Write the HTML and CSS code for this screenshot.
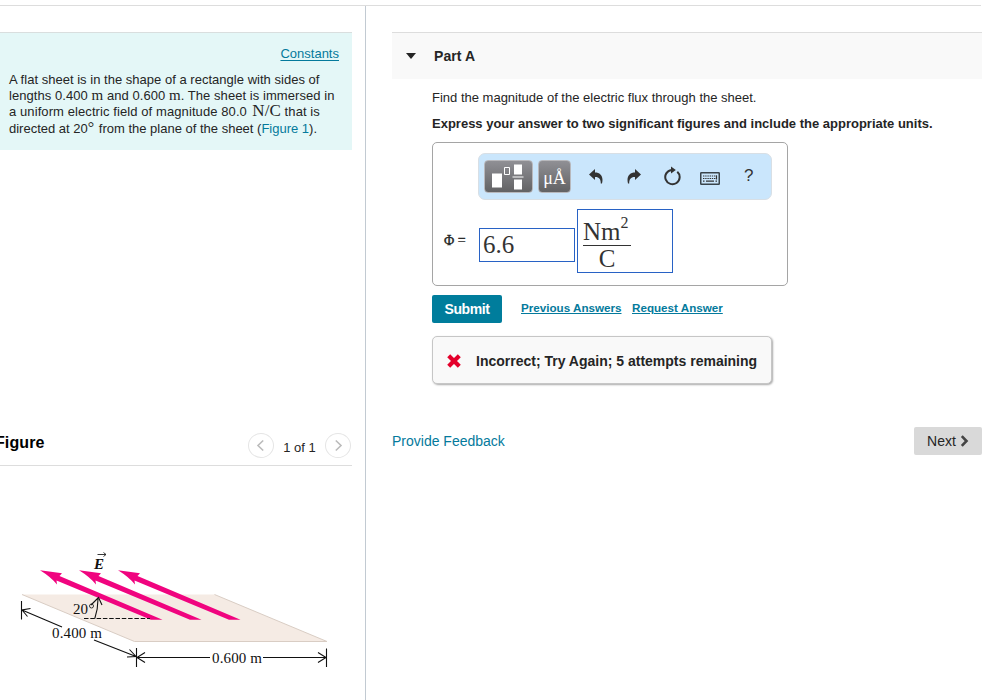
FILE: index.html
```html
<!DOCTYPE html>
<html lang="en">
<head>
<meta charset="utf-8">
<title>Electric flux</title>
<link rel="stylesheet" href="styles.css">
</head>
<body>
<div class="page">
  <aside class="left">
    <section class="intro">
      <div class="constants"><a href="#">Constants</a></div>
      <p class="problem">
        <span class="line l1">A flat sheet is in the shape of a rectangle with sides of</span>
        <span class="line l2">lengths 0.400 <span class="math">m</span> and 0.600 <span class="math">m</span>. The sheet is immersed in</span>
        <span class="line l3">a uniform electric field of magnitude 80.0 &nbsp;<span class="math unit">N/C</span> that is</span>
        <span class="line l4">directed at 20<span class="deg">°</span> from the plane of the sheet (<a href="#">Figure 1</a>).</span>
      </p>
    </section>
    <header class="fig-head">
      <h2>Figure</h2>
      <div class="pager">
        <span class="circle"><svg width="24" height="24" viewBox="0 0 24 24"><path d="M14.2 6.500 9 11.500l5.200 5"/></svg></span>
        <span class="count">1 of 1</span>
        <span class="circle"><svg width="24" height="24" viewBox="0 0 24 24"><path d="M9.800 6.500 15 11.500l-5.200 5"/></svg></span>
      </div>
    </header>
    <svg class="diagram" width="352" height="234" viewBox="0 466 352 234">
      <path class="sheet" d="M22 594.5H214.500L327 641.500H134.500Z"/>
      <path class="sheet-edge" d="M22 594.500 134.500 641.500H327L214.500 594.500"/>
      <g class="field">
        <path id="vec" d="M40 570.200 62 573.200 59.500 576 162.500 619.800H151L56.500 580.600 57 584.500Q51 577 40 570.200Z"/>
        <use href="#vec" x="39"/>
        <use href="#vec" x="78"/>
      </g>
      <g class="ink">
        <path stroke-dasharray="4.500 1.800" d="M84 618.500H150"/>
        <path d="M94.800 618.500Q98 609 98 599M91 605 98.500 597.500 102 605"/>
        <path d="M21.500 601V619.500M22 610 62 627M30.500 608.500 22 610 27.500 616.500"/>
        <path d="M94 640 136 656.500M129.500 649.500 136 656.500 127 657"/>
        <path d="M136.500 648V667M137 657.500H210M145 652.500 137 657.500 145 662.500"/>
        <path d="M263 657.500H326M318 652.500 326 657.500 318 662.500M326.500 648.500V667"/>
      </g>
      <path class="vector-mark" d="M97.500 554.500H106M103.500 552.500 106 554.500 103.500 556.500"/>
      <text class="e-label" x="94" y="569">E</text>
      <text x="73" y="614">20</text>
      <circle class="degree" cx="91.500" cy="606" r="2"/>
      <text x="52" y="637.500" textLength="50">0.400 m</text>
      <text x="212" y="662.500" textLength="50">0.600 m</text>
    </svg>
  </aside>
  <main class="right">
    <header class="part"><span class="caret"></span><h1>Part A</h1></header>
    <div class="body">
      <p class="question"><span>Find the magnitude of the electric flux through the sheet.</span></p>
      <p class="instruction"><span>Express your answer to two significant figures and include the appropriate units.</span></p>
      <section class="answer">
        <div class="toolbar">
          <span class="tool templates">
            <svg width="48" height="32" viewBox="0 0 48 32"><path fill="#fff" d="M7 12.500h10v14H7zM29 3.500h8v10h-8zM29 18.500h8v10h-8zM27.500 15.500h11v1h-11z"/><path fill="none" stroke="#fff" d="M19.500 6.500h5v7h-5z"/></svg>
          </span>
          <span class="tool units">μÅ</span>
          <svg class="undo" width="14" height="16" viewBox="0 0 14 16"><path fill="#333" d="M0 5.500 6 0V3.400C11.500 3.400 14.800 7.300 13 14.500H11.800C11.800 10 10 7.800 6 8V11Z"/></svg>
          <svg class="redo" width="14" height="16" viewBox="0 0 14 16"><path fill="#333" d="M14 5.500 8 0V3.400C2.500 3.400-.8 7.300 1 14.500H2.200C2.200 10 4 7.800 8 8V11Z"/></svg>
          <svg class="reset" width="18" height="20" viewBox="0 0 18 20"><path fill="none" stroke="#333" stroke-width="2" d="M14.300 5.700A7.200 7.200 0 1 1 8.500 3.900"/><path fill="#333" d="M8 .5 12.800 4 8 7.500Z"/></svg>
          <svg class="keys" width="20" height="13" viewBox="0 0 20 13"><rect x=".75" y=".75" width="18.500" height="11.500" rx=".6" fill="none" stroke="#3a444b" stroke-width="1.500"/><path fill="none" stroke="#333" stroke-width="1.200" stroke-dasharray="1.400 .8" d="M3 4H17M3 6.500H17"/><path stroke="#333" stroke-width="1.200" d="M3 9.200H4.500M6 9.200H14M15.500 9.200H17M16.500 3.500V7.500"/></svg>
          <span class="help">?</span>
        </div>
        <div class="equation">
          <span class="phi">Φ =</span>
          <span class="field-box value">6.6</span>
          <span class="field-box units-value"><span class="fraction"><span class="num">Nm<sup>2</sup></span><span class="den">C</span></span></span>
        </div>
      </section>
      <div class="actions">
        <button class="submit">Submit</button>
        <a class="prev" href="#">Previous Answers</a>
        <a class="req" href="#">Request Answer</a>
      </div>
      <div class="feedback">
        <svg width="14" height="14" viewBox="0 0 14 14"><path stroke="#e4002b" stroke-width="4.200" d="M1.700 1.700 12.300 12.300M12.300 1.700 1.700 12.300"/></svg>
        <span>Incorrect; Try Again; 5 attempts remaining</span>
      </div>
    </div>
    <footer class="foot">
      <a href="#">Provide Feedback</a>
      <button class="next">Next<svg width="9" height="12" viewBox="0 0 9 12"><path fill="none" stroke="#444" stroke-width="2.600" d="M1.800 1.200 6.500 6 1.800 10.800"/></svg></button>
    </footer>
  </main>
</div>
</body>
</html>
```
FILE: styles.css
```css
* { box-sizing: border-box; }
body {
  margin: 0;
  padding-top: 5px;
  height: 700px;
  overflow: hidden;
  background: #fff;
  color: #252525;
  font: 13px/16px "Liberation Sans", Arial, sans-serif;
}
h1, h2, p { margin: 0; }
a { color: #047a9c; }
button { border: 0; padding: 0; font: inherit; }
.page { display: flex; width: 981px; height: 695px; border-top: 1px solid #ddd; }
.left { flex: none; width: 366px; padding-top: 26px; border-right: 1px solid #c2cad2; }

.intro { width: 352px; height: 118px; padding: 13px 13px 0 9px; border-top: 1px solid #d9dede; background: #e4f7f7; }
.constants { height: 26px; text-align: right; line-height: 15px; }
.constants a { text-underline-offset: 2px; }
.line { display: block; height: 16px; white-space: nowrap; }
.line a { text-decoration: none; }
.l1 { letter-spacing: .02px; }
.l2 { letter-spacing: .06px; }
.l3 { height: 16px; line-height: 15px; letter-spacing: .09px; }
.math { font-family: "Liberation Serif", serif; font-size: 15px; line-height: 1; }
.unit { font-size: 17px; line-height: 0; margin-left: -2px; }
.deg { margin-right: 1px; font-family: "Liberation Serif", serif; font-size: 16px; line-height: 1; }

.fig-head { display: flex; justify-content: space-between; width: 352px; height: 33px; margin-top: 283px; padding-right: 1px; border-bottom: 1px solid #ddd; }
.fig-head h2 { margin-left: -5px; color: #000; font-size: 16px; line-height: 20px; letter-spacing: .1px; }
.pager { display: flex; }
.circle { display: block; width: 26px; height: 25px; border: 1px solid #e5e5e5; border-radius: 50%; }
.circle svg { display: block; fill: none; stroke: #bbb; stroke-width: 1.6; }
.count { width: 51px; padding-top: 7px; text-align: center; }
.diagram { display: block; }
.sheet { fill: #f5ebe4; }
.sheet-edge { fill: none; stroke: #d9cdc4; }
.field { fill: #f0047f; }
.ink { fill: none; stroke: #111; stroke-width: 1.1; }
.diagram text { font: 15px "Liberation Serif", serif; fill: #111; }
.diagram .e-label { font-weight: bold; font-style: italic; }
.vector-mark, .degree { fill: none; stroke: #222; stroke-width: .9; }

.right { flex: 1; padding: 26px 0 0 26px; }
.part { display: flex; align-items: center; width: 590px; height: 47px; border-top: 1px solid #ddd; background: #f9f9f9; }
.caret { margin: 0 18px 0 14px; border: solid transparent; border-width: 6px 5.5px 0; border-top-color: #252525; }
.part h1 { font-size: 14px; line-height: 18px; letter-spacing: .1px; }
.body { padding-left: 40px; }
.question { height: 35px; padding-top: 11px; white-space: nowrap; }
.instruction { height: 28px; padding-top: 2px; font-weight: bold; white-space: nowrap; }
.answer { width: 356px; height: 144px; padding: 10px 0 0 11px; border: 1px solid #a5a5a5; border-radius: 5px; }
.toolbar { display: flex; align-items: center; width: 294px; height: 47px; margin-left: 34px; padding: 0 16px 0 5px; border: 1px solid #d8dfe5; border-radius: 7px; background: #cae6fc; color: #333; }
.tool { flex: none; display: block; height: 33px; margin-bottom: 1px; border: 1px solid #b8b8bc; border-radius: 4px; background: linear-gradient(#909095, #626264); }
.templates { width: 49px; }
.units { width: 33px; margin: 0 18px 1px 5px; color: #fff; font: 18px/35px "Liberation Serif", serif; text-align: center; }
.toolbar svg { flex: none; }
.redo { margin-left: 24px; }
.reset { margin: 0 0 1px 22px; }
.keys { margin: 3px 0 0 19px; }
.help { margin: 0 0 1px 24px; font-size: 17px; line-height: 20px; }
.equation { display: flex; align-items: center; height: 64px; margin-top: 9px; }
.phi { flex: none; width: 34px; font: 14px/16px "Liberation Serif", serif; -webkit-text-stroke: .35px; white-space: nowrap; }
.field-box { flex: none; width: 96px; height: 34px; margin-left: 1px; padding-left: 4px; border: 1px solid #2862c5; color: #333; font: 25px/32px "Liberation Serif", serif; }
.value { margin-top: 7px; padding-left: 3px; }
.units-value { height: 64px; margin-left: 2px; padding: 9px 0 0 5px; }
.fraction { display: flex; flex-direction: column; width: 48px; text-align: center; line-height: 26px; }
.num { height: 27px; border-bottom: 1px solid #333; text-align: left; white-space: nowrap; }
.num sup { font-size: 16px; line-height: 0; vertical-align: 12px; }
.actions { display: flex; height: 28px; margin-top: 9px; font-size: 11.65px; font-weight: bold; }
.submit { width: 70px; height: 28px; border-radius: 2px; background: #007d9c; color: #fff; font-size: 14px; letter-spacing: -.4px; }
.actions a { margin-top: 5px; text-underline-offset: 1px; white-space: nowrap; }
.prev { width: 111px; margin-left: 19px; }
.feedback { display: flex; align-items: center; width: 340px; height: 48px; margin-top: 13px; padding: 2px 0 0 14px; border: 1px solid #c6c6c6; border-radius: 5px; background: #f9f9f9; box-shadow: 1px 1px 2px #aaa; font-size: 14px; font-weight: bold; white-space: nowrap; }
.feedback svg { margin-right: 15px; }
.foot { display: flex; justify-content: space-between; width: 590px; margin-top: 43px; font-size: 14px; line-height: 28px; }
.foot a { text-decoration: none; }
.next { width: 68px; height: 28px; border-radius: 2px; background: #d9d9d9; color: #252525; }
.next svg { margin-left: 4px; vertical-align: -1px; }
```
